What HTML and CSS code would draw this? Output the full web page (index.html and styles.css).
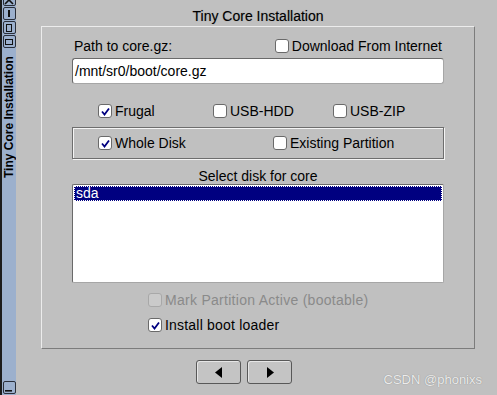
FILE: index.html
```html
<!DOCTYPE html>
<html lang="en">
<head>
    <meta charset="UTF-8">
    <title>Tiny Core Installation</title>
    <link rel="stylesheet" href="styles.css">
</head>
<body>
    <div class="window">
        <aside class="titlebar">
            <div class="tb-buttons">
                <span class="tb-btn tb-close">
                    <svg width="10" height="10" viewBox="0 0 10 10"><path d="M1 1 L9 9 M9 1 L1 9" stroke="#111" stroke-width="1.6"/></svg>
                </span>
                <span class="tb-btn">
                    <svg width="10" height="10" viewBox="0 0 10 10"><rect x="4" y="1" width="2" height="7" fill="#111"/></svg>
                </span>
                <span class="tb-btn">
                    <svg width="10" height="10" viewBox="0 0 10 10"><rect x="2.5" y="1.5" width="5" height="7" fill="none" stroke="#111"/></svg>
                </span>
                <span class="tb-btn">
                    <svg width="10" height="10" viewBox="0 0 10 10"><rect x="1.5" y="2.5" width="7" height="5" fill="none" stroke="#111"/></svg>
                </span>
            </div>
            <div class="tb-title">Tiny Core Installation</div>
            <span class="tb-btn tb-iconify">
                <svg width="10" height="10" viewBox="0 0 10 10"><rect x="1" y="7" width="7" height="1.6" fill="#111"/></svg>
            </span>
        </aside>

        <main class="content">
            <div class="heading">Tiny Core Installation</div>

            <div class="frame">
                <div class="path-row">
                    <span class="path-label">Path to core.gz:</span>
                    <label class="check"><span class="box"></span>Download From Internet</label>
                </div>
                <div class="path-input">/mnt/sr0/boot/core.gz</div>

                <div class="mode-row">
                    <label class="check"><span class="box checked"><svg width="11" height="11" viewBox="0 0 11 11"><path d="M2 5.5 L4.5 8.5 L9 2.5" fill="none" stroke="#000080" stroke-width="1.8"/></svg></span>Frugal</label>
                    <label class="check"><span class="box"></span>USB-HDD</label>
                    <label class="check"><span class="box"></span>USB-ZIP</label>
                </div>

                <div class="target-group">
                    <label class="check"><span class="box checked"><svg width="11" height="11" viewBox="0 0 11 11"><path d="M2 5.5 L4.5 8.5 L9 2.5" fill="none" stroke="#000080" stroke-width="1.8"/></svg></span>Whole Disk</label>
                    <label class="check"><span class="box"></span>Existing Partition</label>
                </div>

                <div class="disk-label">Select disk for core</div>
                <div class="disk-list">
                    <div class="disk-item selected">sda</div>
                </div>

                <div class="option-row mark-row">
                    <label class="check disabled"><span class="box"></span>Mark Partition Active (bootable)</label>
                </div>
                <div class="option-row loader-row">
                    <label class="check"><span class="box checked"><svg width="11" height="11" viewBox="0 0 11 11"><path d="M2 5.5 L4.5 8.5 L9 2.5" fill="none" stroke="#000080" stroke-width="1.8"/></svg></span>Install boot loader</label>
                </div>
            </div>

            <div class="nav">
                <button class="nav-btn"><svg width="8" height="11" viewBox="0 0 8 11"><path d="M7 0 L0 5.5 L7 11 Z" fill="#000"/></svg></button>
                <button class="nav-btn"><svg width="8" height="11" viewBox="0 0 8 11"><path d="M1 0 L8 5.5 L1 11 Z" fill="#000"/></svg></button>
            </div>
        </main>

        <div class="watermark">CSDN @phonixs</div>
    </div>
</body>
</html>
```

FILE: styles.css
```css
body {
    margin: 0;
    font-family: 'Liberation Sans', Arial, sans-serif;
    font-size: 14px;
    color: #000;
    background-color: #c0c0c0;
}

.window {
    position: relative;
    display: flex;
    width: 497px;
    height: 395px;
    overflow: hidden;
    background-color: #c0c0c0;
}

/* vertical window title bar */
.titlebar {
    width: 14px;
    flex-shrink: 0;
    border-left: 2px solid #1c1c1c;
    background-color: #9cb0cd;
    display: flex;
    flex-direction: column;
    align-items: center;
}

.tb-buttons {
    display: flex;
    flex-direction: column;
    gap: 1px;
    margin-top: -7px;
}

.tb-btn {
    width: 11px;
    height: 11px;
    border: 1px solid #2a2f3a;
    border-radius: 2px;
    display: flex;
    align-items: center;
    justify-content: center;
    box-sizing: content-box;
}

.tb-title {
    writing-mode: vertical-rl;
    transform: rotate(180deg);
    font-size: 12px;
    font-weight: bold;
    margin-top: 8px;
    flex: 1;
    text-align: right;
}

.tb-iconify {
    margin-bottom: 1px;
}

.content {
    flex: 1;
    display: flex;
    flex-direction: column;
}

.heading {
    text-align: center;
    font-size: 14px;
    height: 18px;
    line-height: 18px;
    margin-top: 7px;
    padding-left: 3px;
    text-shadow: 0 0 1px #888;
}

.frame {
    margin-top: 1px;
    margin-left: 25px;
    width: 434px;
    height: 323px;
    box-sizing: border-box;
    border: 1px solid #7c7c7c;
    border-top-color: #ececec;
    border-left-color: #ececec;
    padding: 9px 30px 0 30px;
    display: flex;
    flex-direction: column;
}

.path-row {
    display: flex;
    justify-content: space-between;
    align-items: center;
    height: 20px;
    padding: 0 2px;
}

.check {
    display: inline-flex;
    align-items: center;
    gap: 3px;
    white-space: nowrap;
}

.box {
    width: 12px;
    height: 12px;
    border: 1px solid #6a6a6a;
    border-radius: 3px;
    background-color: #fff;
    display: inline-flex;
    align-items: center;
    justify-content: center;
    flex-shrink: 0;
}

.check.disabled {
    color: #8a8a8a;
    letter-spacing: 0.28px;
}

.check.disabled .box {
    background-color: #cacaca;
    border-color: #a8a8a8;
}

.path-input {
    margin-top: 2px;
    height: 26px;
    box-sizing: border-box;
    background-color: #fff;
    border: 1px solid #a6a6a6;
    border-top-color: #6a6a6a;
    border-left-color: #6a6a6a;
    border-radius: 3px;
    padding-left: 2px;
    line-height: 24px;
}

.mode-row {
    margin-top: 17px;
    height: 20px;
    display: grid;
    grid-template-columns: 115px 120px auto;
    align-items: center;
    padding-left: 26px;
}

.target-group {
    margin-top: 6px;
    height: 32px;
    box-sizing: border-box;
    border: 1px solid #6e6e6e;
    box-shadow: 1px 1px 0 #f4f4f4, inset 1px 1px 0 #f4f4f4;
    display: grid;
    grid-template-columns: 175px auto;
    align-items: center;
    padding-left: 25px;
}

.disk-label {
    margin-top: 9px;
    height: 16px;
    line-height: 16px;
    text-align: center;
}

.disk-list {
    height: 99px;
    box-sizing: border-box;
    background-color: #fff;
    border: 1px solid #a6a6a6;
    border-top-color: #6a6a6a;
    border-left-color: #6a6a6a;
    border-radius: 2px;
    padding: 1px;
}

.disk-item {
    height: 15px;
    line-height: 15px;
    padding-left: 2px;
}

.disk-item.selected {
    background-color: #000080;
    color: #fff;
    outline: 1px dotted #fff;
    outline-offset: -1px;
}

.option-row {
    height: 20px;
    display: flex;
    align-items: center;
    padding-left: 76px;
}

.mark-row {
    margin-top: 7px;
}

.loader-row {
    margin-top: 5px;
    letter-spacing: 0.2px;
}

.nav {
    display: flex;
    gap: 6px;
    margin-top: 11px;
    padding-left: 180px;
}

.nav-btn {
    width: 45px;
    height: 24px;
    box-sizing: border-box;
    border: 1px solid #585858;
    border-radius: 3px;
    background-color: #c4c4c4;
    box-shadow: inset 1px 1px 0 #e6e6e6;
    display: flex;
    align-items: center;
    justify-content: center;
    padding: 0;
}

.watermark {
    position: absolute;
    right: 15px;
    bottom: 8px;
    font-size: 13px;
    color: #ececec;
    text-shadow: 0 0 1px #7a7a7a;
}
```
